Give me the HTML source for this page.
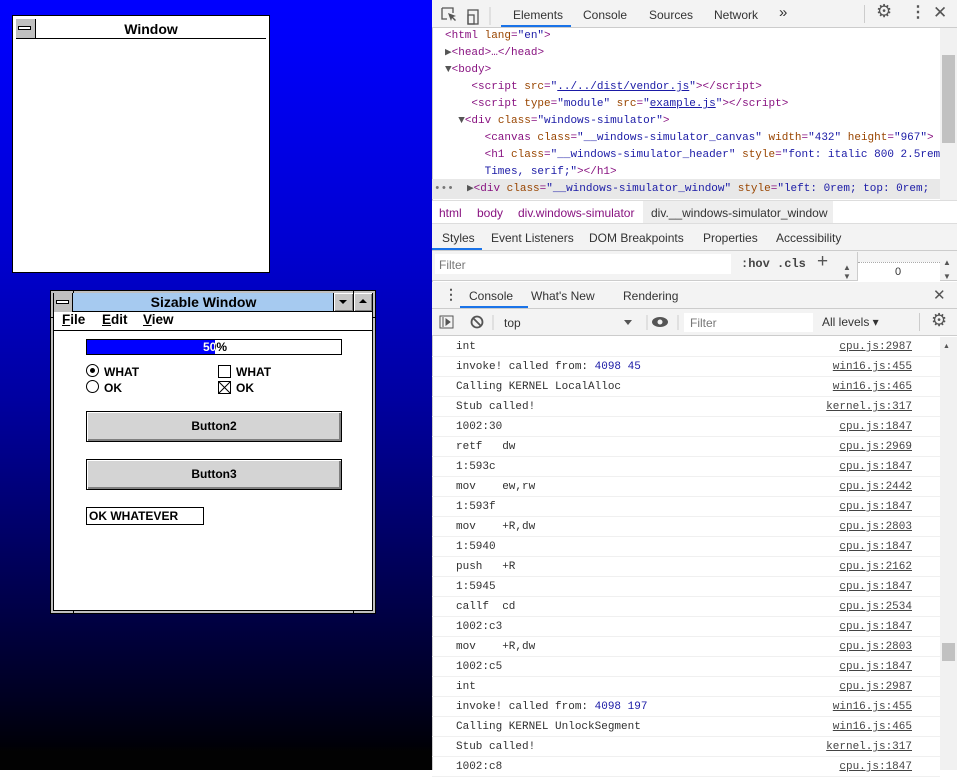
<!DOCTYPE html>
<html><head><meta charset="utf-8"><style>
*{margin:0;padding:0;box-sizing:border-box}
body{width:957px;height:770px;overflow:hidden;position:relative;font-family:"Liberation Sans",sans-serif;background:#fff}
.a{position:absolute}
#desk{left:0;top:0;width:432px;height:770px;background:linear-gradient(#0000ff 0,#0000fa 40px,#0000d0 250px,#0000a0 400px,#000060 550px,#000020 700px,#000008 745px,#020202 752px)}
.sys{background:#c0c0c0;border:1px solid #000}
.sys i{position:absolute;left:2px;top:7px;width:13px;height:4px;border:1px solid #000;background:#fff}
.ttl{font-weight:bold;font-size:14px;text-align:center;color:#000}
.mono{font-family:"Liberation Mono","DejaVu Sans Mono",monospace;font-size:12px}
.dt{font-family:"Liberation Sans",sans-serif;font-size:12px;color:#333}
.row{position:absolute;left:432px;width:508px;height:20px;border-bottom:1px solid #f0f0f0;font-family:"Liberation Mono",monospace;font-size:11px;color:#303030;line-height:20px}
.row span.t{position:absolute;left:24px;white-space:pre}
.row span.s{position:absolute;right:28px;text-decoration:underline;color:#444}
.btn{background:#d4d4d4;border:1px solid #000;box-shadow:inset 1px 1px 0 #fff,inset -2px -2px 0 #808080;font-weight:bold;font-size:12px;text-align:center;line-height:28px}
</style></head><body>
<div id="desk" class="a"></div>

<div class="a" style="left:12px;top:15px;width:258px;height:258px;background:#fff;border:1px solid #000"></div>
<div class="a sys" style="left:16px;top:19px;width:20px;height:19px;border:none;border-right:1px solid #000"><i style="left:2px;top:7px"></i></div>
<div class="a" style="left:16px;top:38px;width:250px;height:1px;background:#000"></div>
<div class="a ttl" style="left:36px;top:20px;width:230px;line-height:18px">Window</div>

<div class="a" style="left:50px;top:290px;width:326px;height:324px;background:#c0c0c0;border:1px solid #000"></div>
<div class="a" style="left:53px;top:293px;width:320px;height:318px;background:#fff;border:1px solid #000"></div>
<div class="a" style="left:73px;top:290px;width:1px;height:4px;background:#000"></div>
<div class="a" style="left:353px;top:290px;width:1px;height:4px;background:#000"></div>
<div class="a" style="left:73px;top:610px;width:1px;height:4px;background:#000"></div>
<div class="a" style="left:353px;top:610px;width:1px;height:4px;background:#000"></div>
<div class="a" style="left:50px;top:317px;width:4px;height:1px;background:#000"></div>
<div class="a" style="left:372px;top:317px;width:4px;height:1px;background:#000"></div>
<div class="a" style="left:54px;top:293px;width:318px;height:19px;background:#a6caf0;border-bottom:1px solid #000"></div>
<div class="a sys" style="left:54px;top:293px;width:19px;height:19px;border:none;border-right:1px solid #000"><i style="left:2px;top:7px;width:13px"></i></div>
<div class="a ttl" style="left:74px;top:294px;width:259px;line-height:17px">Sizable Window</div>
<div class="a" style="left:333px;top:293px;width:20px;height:18px;background:#c8c8c8;border-left:1px solid #000;box-shadow:inset 1px 1px 0 #fff,inset -1px -1px 0 #808080"><div class="a" style="left:5px;top:7px;border-left:4px solid transparent;border-right:4px solid transparent;border-top:4px solid #000"></div></div>
<div class="a" style="left:353px;top:293px;width:19px;height:18px;background:#c8c8c8;border-left:1px solid #000;box-shadow:inset 1px 1px 0 #fff,inset -1px -1px 0 #808080"><div class="a" style="left:5px;top:6px;border-left:4px solid transparent;border-right:4px solid transparent;border-bottom:4px solid #000"></div></div>
<div class="a" style="left:54px;top:312px;width:318px;height:19px;border-bottom:1px solid #000;font-size:13.5px;font-weight:bold;line-height:16px">
<span class="a" style="left:8px"><u>F</u>ile</span><span class="a" style="left:48px"><u>E</u>dit</span><span class="a" style="left:89px"><u>V</u>iew</span></div>
<div class="a" style="left:86px;top:339px;width:256px;height:16px;border:1px solid #000;background:#fff"></div>
<div class="a" style="left:87px;top:340px;width:128px;height:14px;background:#0000ff"></div>
<div class="a" style="left:203px;top:339px;font-size:12px;font-weight:bold;line-height:16px;color:#000">50%</div>
<div class="a" style="left:203px;top:339px;width:12px;overflow:hidden;font-size:12px;font-weight:bold;line-height:16px;color:#fff">50</div>
<div class="a" style="left:86px;top:364px;width:13px;height:13px;border:1px solid #000;border-radius:50%"><div class="a" style="left:3px;top:3px;width:5px;height:5px;border-radius:50%;background:#000"></div></div>
<div class="a" style="left:86px;top:380px;width:13px;height:13px;border:1px solid #000;border-radius:50%"></div>
<div class="a" style="left:104px;top:364px;font-size:12px;font-weight:bold;line-height:16px">WHAT</div>
<div class="a" style="left:104px;top:380px;font-size:12px;font-weight:bold;line-height:16px">OK</div>
<div class="a" style="left:218px;top:365px;width:13px;height:13px;border:1px solid #000"></div>
<svg class="a" style="left:218px;top:381px" width="13" height="13"><rect x=".5" y=".5" width="12" height="12" fill="none" stroke="#000"/><path d="M1 1L12 12M12 1L1 12" stroke="#000"/></svg>
<div class="a" style="left:236px;top:364px;font-size:12px;font-weight:bold;line-height:16px">WHAT</div>
<div class="a" style="left:236px;top:380px;font-size:12px;font-weight:bold;line-height:16px">OK</div>
<div class="a btn" style="left:86px;top:411px;width:256px;height:31px">Button2</div>
<div class="a btn" style="left:86px;top:459px;width:256px;height:31px">Button3</div>
<div class="a" style="left:86px;top:507px;width:118px;height:18px;border:1px solid #000;font-size:12px;font-weight:bold;line-height:16px;padding-left:2px">OK WHATEVER</div>

<div class="a" style="left:432px;top:0;width:525px;height:770px;background:#fff;border-left:1px solid #ccc"></div>
<div class="a" style="left:432px;top:0;width:525px;height:28px;background:#f3f3f3;border-bottom:1px solid #ccc"></div>
<svg class="a" style="left:440px;top:5px" width="60" height="20"><path d="M2 3h11v5M2 3v11h5" fill="none" stroke="#555" stroke-width="1.3"/><path d="M8 8l8 3-3 1 3 3-1 1-3-3-1 3z" fill="#555"/><rect x="28" y="5" width="10" height="14" fill="none" stroke="#555" stroke-width="1.3"/><rect x="28" y="10" width="6" height="9" fill="none" stroke="#555" stroke-width="1.3"/><path d="M50 2v18" stroke="#ccc"/></svg>
<div class="a dt" style="left:513px;top:8px">Elements</div>
<div class="a" style="left:501px;top:25px;width:70px;height:2px;background:#1a73e8"></div>
<div class="a dt" style="left:583px;top:8px">Console</div>
<div class="a dt" style="left:649px;top:8px">Sources</div>
<div class="a dt" style="left:714px;top:8px">Network</div>
<div class="a dt" style="left:779px;top:4px;font-size:15px">»</div>
<div class="a" style="left:864px;top:5px;width:1px;height:18px;background:#ccc"></div>
<div class="a" style="left:876px;top:1px;font-size:18px;color:#555">⚙</div>
<div class="a" style="left:910px;top:2px;font-size:16px;color:#555;font-weight:bold">⋮</div>
<div class="a" style="left:933px;top:3px;font-size:17px;color:#555">✕</div>

<div class="a mono" style="left:445px;top:28px;line-height:17px;font-size:11px;color:#881280;white-space:pre"><span>&lt;html <span style="color:#994500">lang</span>=<span style="color:#1a1aa6">"en"</span>&gt;</span>
<span style="color:#555">▶</span>&lt;head&gt;…&lt;/head&gt;
<span style="color:#555">▼</span>&lt;body&gt;
    &lt;script <span style="color:#994500">src</span>=<span style="color:#1a1aa6">"<u>../../dist/vendor.js</u>"</span>&gt;&lt;/script&gt;
    &lt;script <span style="color:#994500">type</span>=<span style="color:#1a1aa6">"module"</span> <span style="color:#994500">src</span>=<span style="color:#1a1aa6">"<u>example.js</u>"</span>&gt;&lt;/script&gt;
  <span style="color:#555">▼</span>&lt;div <span style="color:#994500">class</span>=<span style="color:#1a1aa6">"windows-simulator"</span>&gt;
      &lt;canvas <span style="color:#994500">class</span>=<span style="color:#1a1aa6">"__windows-simulator_canvas"</span> <span style="color:#994500">width</span>=<span style="color:#1a1aa6">"432"</span> <span style="color:#994500">height</span>=<span style="color:#1a1aa6">"967"</span>&gt;
      &lt;h1 <span style="color:#994500">class</span>=<span style="color:#1a1aa6">"__windows-simulator_header"</span> <span style="color:#994500">style</span>=<span style="color:#1a1aa6">"font: italic 800 2.5rem</span>
<span style="color:#1a1aa6">      Times, serif;"</span>&gt;&lt;/h1&gt;</div>
<div class="a" style="left:432px;top:179px;width:508px;height:20px;background:#e8e8e8;overflow:hidden"><div class="a mono" style="left:2px;top:2px;font-size:11px;color:#881280;white-space:pre;line-height:17px"><span style="color:#777">•••</span>  <span style="color:#555">▶</span>&lt;div <span style="color:#994500">class</span>=<span style="color:#1a1aa6">"__windows-simulator_window"</span> <span style="color:#994500">style</span>=<span style="color:#1a1aa6">"left: 0rem; top: 0rem;</span></div></div>
<div class="a" style="left:940px;top:28px;width:17px;height:172px;background:#f1f1f1"></div>
<div class="a" style="left:942px;top:55px;width:13px;height:88px;background:#c1c1c1"></div>
<div class="a" style="left:432px;top:200px;width:525px;height:24px;background:#fff;border-top:1px solid #ddd;border-bottom:1px solid #ddd"></div>
<div class="a dt" style="left:439px;top:206px;color:#881280">html</div>
<div class="a dt" style="left:477px;top:206px;color:#881280">body</div>
<div class="a dt" style="left:518px;top:206px;color:#881280">div.windows-simulator</div>
<div class="a" style="left:643px;top:201px;width:190px;height:22px;background:#eee"></div>
<div class="a dt" style="left:651px;top:206px">div.__windows-simulator_window</div>
<div class="a" style="left:432px;top:224px;width:525px;height:27px;background:#f3f3f3;border-bottom:1px solid #ccc"></div>
<div class="a dt" style="left:442px;top:231px">Styles</div>
<div class="a" style="left:432px;top:248px;width:50px;height:2px;background:#1a73e8"></div>
<div class="a dt" style="left:491px;top:231px">Event Listeners</div>
<div class="a dt" style="left:589px;top:231px">DOM Breakpoints</div>
<div class="a dt" style="left:703px;top:231px">Properties</div>
<div class="a dt" style="left:776px;top:231px">Accessibility</div>
<div class="a" style="left:432px;top:251px;width:525px;height:30px;background:#f3f3f3;border-bottom:1px solid #ccc"></div>
<div class="a" style="left:435px;top:254px;width:296px;height:20px;background:#fff"></div>
<div class="a dt" style="left:439px;top:258px;color:#777">Filter</div>
<div class="a mono" style="left:741px;top:257px;font-weight:bold;color:#444">:hov .cls</div>
<div class="a" style="left:817px;top:251px;font-size:19px;color:#555">+</div>
<div class="a" style="left:843px;top:263px;font-size:8px;color:#555;line-height:9px">▲<br>▼</div>
<div class="a" style="left:857px;top:252px;width:1px;height:29px;background:#ccc"></div>
<div class="a" style="left:858px;top:262px;width:82px;height:19px;background:#fff;border-top:1px dotted #aaa"></div>
<div class="a dt" style="left:895px;top:266px;font-size:11px">0</div>
<div class="a" style="left:943px;top:256px;font-size:8px;color:#555;line-height:14px">▲<br>▼</div>
<div class="a" style="left:432px;top:282px;width:525px;height:27px;background:#f3f3f3;border-bottom:1px solid #ccc"></div>
<div class="a" style="left:444px;top:286px;font-size:14px;color:#555;font-weight:bold">⋮</div>
<div class="a dt" style="left:469px;top:289px">Console</div>
<div class="a" style="left:460px;top:306px;width:68px;height:2px;background:#1a73e8"></div>
<div class="a dt" style="left:531px;top:289px">What's New</div>
<div class="a dt" style="left:623px;top:289px">Rendering</div>
<div class="a" style="left:933px;top:286px;font-size:15px;color:#555">✕</div>
<div class="a" style="left:432px;top:309px;width:525px;height:27px;background:#f3f3f3;border-bottom:1px solid #ccc"></div>
<svg class="a" style="left:438px;top:314px" width="500" height="18"><rect x="2" y="2" width="13" height="12" fill="none" stroke="#555"/><path d="M5 3v10M8 5l4 3-4 3z" fill="#555" stroke="#555"/><circle cx="39" cy="8" r="5.5" fill="none" stroke="#555" stroke-width="1.8"/><path d="M35 4l8 8" stroke="#555" stroke-width="1.8"/><path d="M55 1v15M209 1v15M240 1v15" stroke="#ccc"/><path d="M186 6h8l-4 5z" fill="#555"/><ellipse cx="222" cy="8" rx="8" ry="5" fill="#555"/><circle cx="222" cy="8" r="2.5" fill="#f3f3f3"/></svg>
<div class="a dt" style="left:504px;top:316px">top</div>
<div class="a" style="left:684px;top:313px;width:129px;height:19px;background:#fff"></div>
<div class="a dt" style="left:690px;top:316px;color:#777">Filter</div>
<div class="a dt" style="left:822px;top:315px">All levels ▾</div>
<div class="a" style="left:919px;top:313px;width:1px;height:18px;background:#ccc"></div>
<div class="a" style="left:931px;top:310px;font-size:18px;color:#555">⚙</div>

<div class="row" style="top:337px"><span class="t">int</span><span class="s">cpu.js:2987</span></div>
<div class="row" style="top:357px"><span class="t">invoke! called from: <span style="color:#1a1aa6">4098 45</span></span><span class="s">win16.js:455</span></div>
<div class="row" style="top:377px"><span class="t">Calling KERNEL LocalAlloc</span><span class="s">win16.js:465</span></div>
<div class="row" style="top:397px"><span class="t">Stub called!</span><span class="s">kernel.js:317</span></div>
<div class="row" style="top:417px"><span class="t">1002:30</span><span class="s">cpu.js:1847</span></div>
<div class="row" style="top:437px"><span class="t">retf   dw</span><span class="s">cpu.js:2969</span></div>
<div class="row" style="top:457px"><span class="t">1:593c</span><span class="s">cpu.js:1847</span></div>
<div class="row" style="top:477px"><span class="t">mov    ew,rw</span><span class="s">cpu.js:2442</span></div>
<div class="row" style="top:497px"><span class="t">1:593f</span><span class="s">cpu.js:1847</span></div>
<div class="row" style="top:517px"><span class="t">mov    +R,dw</span><span class="s">cpu.js:2803</span></div>
<div class="row" style="top:537px"><span class="t">1:5940</span><span class="s">cpu.js:1847</span></div>
<div class="row" style="top:557px"><span class="t">push   +R</span><span class="s">cpu.js:2162</span></div>
<div class="row" style="top:577px"><span class="t">1:5945</span><span class="s">cpu.js:1847</span></div>
<div class="row" style="top:597px"><span class="t">callf  cd</span><span class="s">cpu.js:2534</span></div>
<div class="row" style="top:617px"><span class="t">1002:c3</span><span class="s">cpu.js:1847</span></div>
<div class="row" style="top:637px"><span class="t">mov    +R,dw</span><span class="s">cpu.js:2803</span></div>
<div class="row" style="top:657px"><span class="t">1002:c5</span><span class="s">cpu.js:1847</span></div>
<div class="row" style="top:677px"><span class="t">int</span><span class="s">cpu.js:2987</span></div>
<div class="row" style="top:697px"><span class="t">invoke! called from: <span style="color:#1a1aa6">4098 197</span></span><span class="s">win16.js:455</span></div>
<div class="row" style="top:717px"><span class="t">Calling KERNEL UnlockSegment</span><span class="s">win16.js:465</span></div>
<div class="row" style="top:737px"><span class="t">Stub called!</span><span class="s">kernel.js:317</span></div>
<div class="row" style="top:757px"><span class="t">1002:c8</span><span class="s">cpu.js:1847</span></div>
<div class="a" style="left:940px;top:337px;width:17px;height:433px;background:#f1f1f1"></div>
<div class="a" style="left:943px;top:343px;font-size:7px;color:#555">▲</div>
<div class="a" style="left:942px;top:643px;width:13px;height:18px;background:#c1c1c1"></div>
</body></html>
